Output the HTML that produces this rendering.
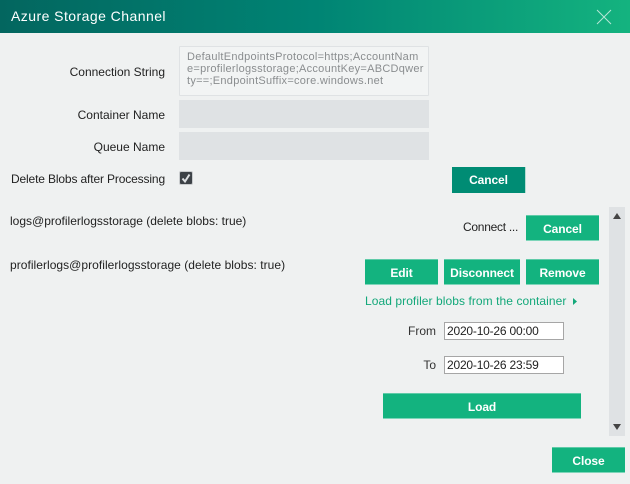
<!DOCTYPE html>
<html>
<head>
<meta charset="utf-8">
<style>
html,body{margin:0;padding:0}
body{width:630px;height:484px;overflow:hidden;background:#eff1f1;position:relative;font-family:"Liberation Sans",sans-serif;font-size:12px;color:#222}
div{position:absolute;box-sizing:border-box;white-space:nowrap}
.t{line-height:16px}
.r{text-align:right}
.f{background:#dfe2e4}
.b{background:#13b37f;color:#fff;font-weight:bold;text-align:center;height:26px;line-height:26px;width:73px;border-top:1px solid #5fcba8;border-bottom:1px solid #7dd5b9;letter-spacing:-.1px}
.i{width:120px;height:18px;background:#fff;border:1px solid #a6a6a6;line-height:16px;padding-left:2px;color:#222;letter-spacing:-.2px}
</style>
</head>
<body>
<div style="left:0;top:0;width:630px;height:33px;background:linear-gradient(90deg,#03665f 0%,#008474 50%,#14b37f 100%)"></div>
<div class="t" style="left:11px;top:8px;color:#fff;font-size:14px;line-height:17px;letter-spacing:.45px">Azure Storage Channel</div>
<svg style="position:absolute;left:596px;top:9px" width="16" height="16" viewBox="0 0 16 16"><path d="M1 1L15 15M15 1L1 15" stroke="#b5e6d5" stroke-width="1" fill="none"/></svg>

<div class="t r" style="left:0;width:165px;top:64px">Connection String</div>
<div class="t r" style="left:0;width:165px;top:107px">Container Name</div>
<div class="t r" style="left:0;width:165px;top:139px">Queue Name</div>
<div class="t r" style="left:0;width:165px;top:171px;letter-spacing:-.14px">Delete Blobs after Processing</div>

<div style="left:179px;top:46px;width:250px;height:50px;background:#f2f4f4;border:1px solid #dfe2e4;border-radius:1px"></div>
<div style="left:187px;top:51px;color:#8a8d8f;font-size:11px;line-height:12px;letter-spacing:.27px">DefaultEndpointsProtocol=https;AccountNam<br>e=profilerlogsstorage;AccountKey=ABCDqwer<br>ty==;EndpointSuffix=core.windows.net</div>
<div class="f" style="left:179px;top:100px;width:250px;height:28px"></div>
<div class="f" style="left:179px;top:132px;width:250px;height:28px"></div>

<div style="left:179px;top:171px;width:14px;height:14px;background:#3d4247;border:1px solid #c9ccce;border-radius:2px"></div>
<svg style="position:absolute;left:179px;top:171px" width="14" height="14" viewBox="0 0 14 14"><path d="M3.5 7.5L6 10.5L10.5 3.5" stroke="#dfe2e4" stroke-width="2" fill="none"/></svg>

<div class="b" style="left:452px;top:167px;background:#008c74;border:0;border-right:1px solid #b5dcd2;width:74px">Cancel</div>

<div class="t" style="left:10px;top:213px">logs@profilerlogsstorage (delete blobs: true)</div>
<div class="t" style="left:10px;top:257px;letter-spacing:.04px">profilerlogs@profilerlogsstorage (delete blobs: true)</div>

<div class="t" style="left:463px;top:219px;letter-spacing:-.27px">Connect ...</div>
<div class="b" style="left:526px;top:215px">Cancel</div>
<div class="b" style="left:365px;top:259px">Edit</div>
<div class="b" style="left:444px;top:259px;width:76px">Disconnect</div>
<div class="b" style="left:526px;top:259px">Remove</div>

<div class="t" style="left:365px;top:293px;color:#13a87a;letter-spacing:.07px">Load profiler blobs from the container</div>
<svg style="position:absolute;left:572px;top:297px" width="6" height="9" viewBox="0 0 6 9"><path d="M1 1L5 4.5L1 8Z" fill="#13a87a"/></svg>

<div class="t r" style="left:380px;width:56px;top:323px;color:#333">From</div>
<div class="i" style="left:444px;top:322px">2020-10-26 00:00</div>
<div class="t r" style="left:380px;width:56px;top:357px;color:#333">To</div>
<div class="i" style="left:444px;top:356px">2020-10-26 23:59</div>

<div class="b" style="left:383px;top:393px;width:198px">Load</div>

<div style="left:609px;top:207px;width:16px;height:229px;background:#dfe2e4"></div>
<svg style="position:absolute;left:612px;top:212px" width="10" height="8" viewBox="0 0 10 8"><path d="M5 1L9 7H1Z" fill="#444"/></svg>
<svg style="position:absolute;left:612px;top:423px" width="10" height="8" viewBox="0 0 10 8"><path d="M1 1H9L5 7Z" fill="#444"/></svg>

<div class="b" style="left:552px;top:447px">Close</div>
</body>
</html>
